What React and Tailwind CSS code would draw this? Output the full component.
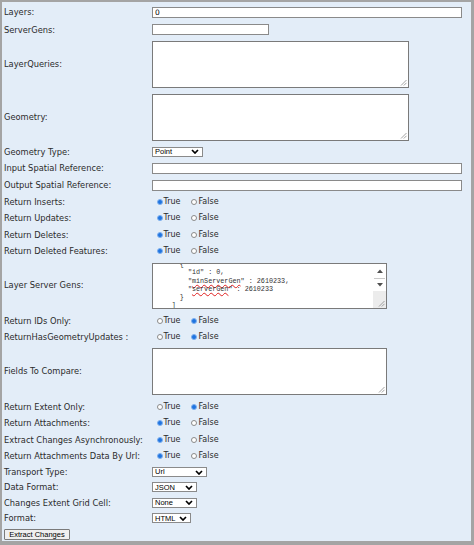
import React from "react";

function Grip() {
  return (
    <svg width="7" height="7" viewBox="0 0 7 7" className="absolute right-[1px] bottom-[1px]">
      <path d="M6.5 1 L1 6.5 M6.5 3.8 L3.8 6.5" stroke="#8a8a8a" strokeWidth="0.8" fill="none" />
    </svg>
  );
}

function Row({ h, label, children }) {
  return (
    <div className={`flex items-center shrink-0 ${h}`}>
      <div className="w-[148px] shrink-0 leading-none">{label}</div>
      <div className="flex items-center">{children}</div>
    </div>
  );
}

function TextInput({ w, value = "" }) {
  return (
    <input
      readOnly
      value={value}
      className={`${w} h-[11px] bg-white border border-[#8a8a8a] px-[2px] text-[7.5px] leading-none text-black outline-none`}
    />
  );
}

function TextArea({ w }) {
  return (
    <div className={`relative ${w} h-[47px] bg-white border border-[#7a7a7a]`}>
      <Grip />
    </div>
  );
}

function Select({ w, value }) {
  return (
    <div
      className={`${w} h-[10px] bg-white border border-[#8a8a8a] flex items-center justify-between pl-[2px] pr-[3px] font-['Liberation_Sans',Arial,sans-serif] text-[7.5px] leading-none text-black`}
    >
      <span>{value}</span>
      <svg width="8" height="5" viewBox="0 0 8 5">
        <path d="M1 1 L4 4 L7 1" fill="none" stroke="#000" strokeWidth="1.7" />
      </svg>
    </div>
  );
}

function Radio({ on }) {
  return on ? (
    <span className="w-[6px] h-[6px] rounded-full bg-[#1f74e0] border border-[#7fb0ee] shrink-0" />
  ) : (
    <span className="w-[6px] h-[6px] rounded-full bg-white border border-[#8a8a8a] shrink-0" />
  );
}

function Bool({ on }) {
  return (
    <div className="flex items-center pl-[4.5px] leading-none text-[8px]">
      <Radio on={on} />
      <span className="ml-[1px]">True</span>
      <span className="ml-[10px] flex">
        <Radio on={!on} />
      </span>
      <span className="ml-[2px]">False</span>
    </div>
  );
}

function ServerGensBox() {
  const spell = "underline decoration-wavy decoration-[#e02020] underline-offset-[1px]";
  return (
    <div className="relative w-[235px] h-[46px] bg-white border border-[#7a7a7a] flex overflow-hidden">
      <div className="flex-1 overflow-hidden pl-[2.5px] font-['Liberation_Mono',monospace] text-[6.75px] leading-[8.3px] text-[#333]">
        <pre className="-mt-[3.5px] font-['Liberation_Mono',monospace]">
          {"      {\n        \"id\" : 0,\n        \""}
          <span className={spell}>minServerGen</span>
          {"\" : 2610233,\n        \""}
          <span className={spell}>serverGen</span>
          {"\" : 2610233\n      }\n    ]"}
        </pre>
      </div>
      <div className="w-[13px] shrink-0 flex flex-col">
        <div className="h-[14px] flex items-center justify-center">
          <svg width="6" height="4" viewBox="0 0 6 4">
            <path d="M0 4 L3 0.5 L6 4 Z" fill="#505050" />
          </svg>
        </div>
        <div className="h-[1px] bg-[#c8c8c8] mx-[1px]" />
        <div className="h-[12px] flex items-center justify-center">
          <svg width="6" height="4" viewBox="0 0 6 4">
            <path d="M0 0 L3 3.5 L6 0 Z" fill="#505050" />
          </svg>
        </div>
        <div className="flex-1 bg-[#ececec]" />
      </div>
      <Grip />
    </div>
  );
}

export default function App() {
  return (
    <div className="w-[474px] h-[545px] bg-[#a4a4a4] pt-[2px] pl-[2px] pr-[3px] pb-[4px]">
      <div className="h-full bg-[#e3edf8] pl-[2px] pt-[2px] flex flex-col font-['DejaVu_Sans',Verdana,sans-serif] text-[8.3px] text-[#2b2b2b]">
        <Row h="h-[17px]" label="Layers:">
          <TextInput w="w-[310px]" value="0" />
        </Row>
        <Row h="h-[17.5px]" label="ServerGens:">
          <TextInput w="w-[117px]" />
        </Row>
        <Row h="h-[52px]" label="LayerQueries:">
          <TextArea w="w-[257px]" />
        </Row>
        <Row h="h-[53px]" label="Geometry:">
          <TextArea w="w-[257px]" />
        </Row>
        <Row h="h-[16.5px]" label="Geometry Type:">
          <Select w="w-[51px]" value="Point" />
        </Row>
        <Row h="h-[16.5px]" label="Input Spatial Reference:">
          <TextInput w="w-[310px]" />
        </Row>
        <Row h="h-[17px]" label="Output Spatial Reference:">
          <TextInput w="w-[310px]" />
        </Row>
        <Row h="h-[16.5px]" label="Return Inserts:">
          <Bool on />
        </Row>
        <Row h="h-[16.5px]" label="Return Updates:">
          <Bool on />
        </Row>
        <Row h="h-[16.5px]" label="Return Deletes:">
          <Bool on />
        </Row>
        <Row h="h-[16.5px]" label="Return Deleted Features:">
          <Bool on />
        </Row>
        <div className="flex items-center shrink-0 h-[53px] pb-[1px]">
          <div className="w-[148px] shrink-0 leading-none">Layer Server Gens:</div>
          <ServerGensBox />
        </div>
        <Row h="h-[16.5px]" label="Return IDs Only:">
          <Bool on={false} />
        </Row>
        <Row h="h-[16.5px]" label="ReturnHasGeometryUpdates :">
          <Bool on={false} />
        </Row>
        <div className="flex items-center shrink-0 h-[53px] pb-[2px]">
          <div className="w-[148px] shrink-0 leading-none">Fields To Compare:</div>
          <TextArea w="w-[235px]" />
        </div>
        <Row h="h-[16.5px]" label="Return Extent Only:">
          <Bool on={false} />
        </Row>
        <Row h="h-[16.5px]" label="Return Attachments:">
          <Bool on />
        </Row>
        <Row h="h-[16.5px]" label="Extract Changes Asynchronously:">
          <Bool on />
        </Row>
        <Row h="h-[16.5px]" label="Return Attachments Data By Url:">
          <Bool on />
        </Row>
        <Row h="h-[15px]" label="Transport Type:">
          <Select w="w-[55px]" value="Url" />
        </Row>
        <Row h="h-[15.5px]" label="Data Format:">
          <Select w="w-[45px]" value="JSON" />
        </Row>
        <Row h="h-[15.5px]" label="Changes Extent Grid Cell:">
          <Select w="w-[45px]" value="None" />
        </Row>
        <Row h="h-[15.5px]" label="Format:">
          <Select w="w-[39px]" value="HTML" />
        </Row>
        <div className="flex items-center shrink-0 h-[17px]">
          <button className="h-[11px] w-[66px] bg-[#efefef] border border-[#7a7a7a] rounded-[1px] font-['Liberation_Sans',Arial,sans-serif] text-[7.5px] leading-none text-black flex items-center justify-center">
            Extract Changes
          </button>
        </div>
      </div>
    </div>
  );
}
